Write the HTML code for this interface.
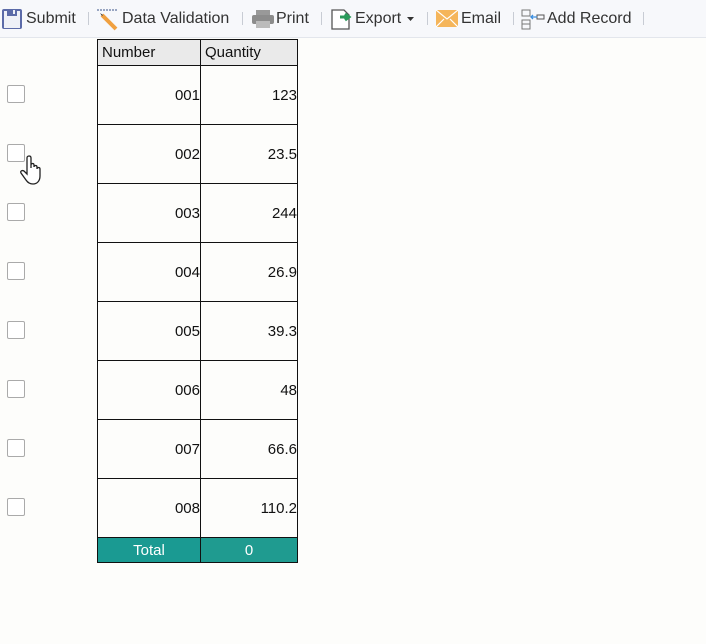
<!DOCTYPE html>
<html><head><style>
body{margin:0;width:706px;height:644px;background:#fdfdfb;font-family:"Liberation Sans",Arial,sans-serif;position:relative;overflow:hidden}
.tb{position:absolute;left:0;top:0;width:706px;height:37px;background:#f7f8fb;border-bottom:1px solid #e3e6ec}
.t{position:absolute;top:9px;font-size:16px;color:#333;line-height:19px}
.sep{position:absolute;top:12px;width:1px;height:13px;background:#c8ccd4}
svg{position:absolute}
.cell{position:absolute;border:1px solid #111;box-sizing:border-box;font-size:15px;color:#111}
.cb{position:absolute;left:7px;width:16px;height:16px;border:1px solid #aaa;border-radius:2px;background:#fff}
</style></head><body>
<div class="tb">
<svg style="left:1px;top:8px" width="22" height="22" viewBox="0 0 22 22"><rect x="1" y="1" width="20" height="20" rx="2" fill="#5b6aa8"/><rect x="3" y="3" width="16" height="17" fill="#eef0f7"/><rect x="6" y="1" width="10" height="7" fill="#5b6aa8"/><rect x="12" y="2" width="2" height="4" fill="#eef0f7"/></svg>
<div class="t" style="left:26px">Submit</div>
<div class="sep" style="left:88px"></div>
<svg style="left:96px;top:8px" width="24" height="24" viewBox="0 0 24 24"><path d="M1 2h20" stroke="#7a8ab0" stroke-width="1.5" stroke-dasharray="2 1"/><path d="M6 7l14 14" stroke="#f0a040" stroke-width="4"/><path d="M4 5l3 2-1 1z" fill="#333"/></svg>
<div class="t" style="left:122px">Data Validation</div>
<div class="sep" style="left:242px"></div>
<svg style="left:251px;top:9px" width="24" height="20" viewBox="0 0 24 20"><rect x="5" y="1" width="14" height="5" fill="#999"/><rect x="1" y="6" width="22" height="9" rx="2" fill="#8c8c8c"/><rect x="5" y="12" width="14" height="7" fill="#bbb"/></svg>
<div class="t" style="left:276px">Print</div>
<div class="sep" style="left:321px"></div>
<svg style="left:330px;top:7px" width="24" height="24" viewBox="0 0 24 24"><path d="M2 3h12l5 5v14H2z" fill="#fff" stroke="#555" stroke-width="1.3"/><path d="M10 10h8M15 7l4 3-4 3" stroke="#2a9a5a" stroke-width="3" fill="none"/></svg>
<div class="t" style="left:355px">Export</div>
<svg style="left:407px;top:17px" width="8" height="5"><path d="M0 0h7L3.5 4z" fill="#333"/></svg>
<div class="sep" style="left:427px"></div>
<svg style="left:436px;top:10px" width="22" height="17" viewBox="0 0 22 17"><rect width="22" height="17" fill="#f5b55a"/><path d="M0 0l11 9 11-9M0 17l8-8M22 17l-8-8" stroke="#fff" stroke-width="1.2" fill="none"/></svg>
<div class="t" style="left:461px">Email</div>
<div class="sep" style="left:513px"></div>
<svg style="left:521px;top:9px" width="24" height="22" viewBox="0 0 24 22"><rect x="1" y="1" width="8" height="6" fill="none" stroke="#777"/><rect x="1" y="11" width="8" height="9" fill="none" stroke="#777"/><path d="M1 15h8" stroke="#777"/><rect x="16" y="6" width="7" height="4" fill="none" stroke="#555"/><path d="M10 8h6M12 6l-2 2 2 2" stroke="#3a8ee0" stroke-width="1.3" fill="none"/></svg>
<div class="t" style="left:547px">Add Record</div>
<div class="sep" style="left:643px"></div>
</div>

<div class="cell" style="left:97px;top:39px;width:104px;height:27px;background:#eaeaea;padding:4px 0 0 4px">Number</div>
<div class="cell" style="left:200px;top:39px;width:98px;height:27px;background:#eaeaea;padding:4px 0 0 4px">Quantity</div>

<div class="cell" style="left:97px;top:537px;width:104px;height:26px;background:#1a9a92;color:#fff;text-align:center;line-height:25px">Total</div>
<div class="cell" style="left:200px;top:537px;width:98px;height:26px;background:#1f9b90;color:#fff;text-align:center;line-height:25px">0</div>

<div class="cell" style="left:97px;top:65px;width:104px;height:60px;text-align:right;line-height:60px">001</div><div class="cell" style="left:200px;top:65px;width:98px;height:60px;text-align:right;line-height:60px">123</div><div class="cb" style="top:85px"></div>
<div class="cell" style="left:97px;top:124px;width:104px;height:60px;text-align:right;line-height:60px">002</div><div class="cell" style="left:200px;top:124px;width:98px;height:60px;text-align:right;line-height:60px">23.5</div><div class="cb" style="top:144px"></div>
<div class="cell" style="left:97px;top:183px;width:104px;height:60px;text-align:right;line-height:60px">003</div><div class="cell" style="left:200px;top:183px;width:98px;height:60px;text-align:right;line-height:60px">244</div><div class="cb" style="top:203px"></div>
<div class="cell" style="left:97px;top:242px;width:104px;height:60px;text-align:right;line-height:60px">004</div><div class="cell" style="left:200px;top:242px;width:98px;height:60px;text-align:right;line-height:60px">26.9</div><div class="cb" style="top:262px"></div>
<div class="cell" style="left:97px;top:301px;width:104px;height:60px;text-align:right;line-height:60px">005</div><div class="cell" style="left:200px;top:301px;width:98px;height:60px;text-align:right;line-height:60px">39.3</div><div class="cb" style="top:321px"></div>
<div class="cell" style="left:97px;top:360px;width:104px;height:60px;text-align:right;line-height:60px">006</div><div class="cell" style="left:200px;top:360px;width:98px;height:60px;text-align:right;line-height:60px">48</div><div class="cb" style="top:380px"></div>
<div class="cell" style="left:97px;top:419px;width:104px;height:60px;text-align:right;line-height:60px">007</div><div class="cell" style="left:200px;top:419px;width:98px;height:60px;text-align:right;line-height:60px">66.6</div><div class="cb" style="top:439px"></div>
<div class="cell" style="left:97px;top:478px;width:104px;height:60px;text-align:right;line-height:60px">008</div><div class="cell" style="left:200px;top:478px;width:98px;height:60px;text-align:right;line-height:60px">110.2</div><div class="cb" style="top:498px"></div>

<svg style="left:20px;top:154px" width="28" height="34" viewBox="0 0 28 34"><path d="M9 2c1.5 0 2 1 2 2v10l0-3c0-2 3-2 3 0v2c0-2 3-2 3 0v2c0-2 3-2 3 0v7c0 5-3 8-7 8-3 0-5-1-7-4l-5-7c-1-2 1-3 3-2l3 3V4c0-1 .5-2 2-2z" fill="#fff" stroke="#222" stroke-width="1.3"/></svg>
</body></html>
